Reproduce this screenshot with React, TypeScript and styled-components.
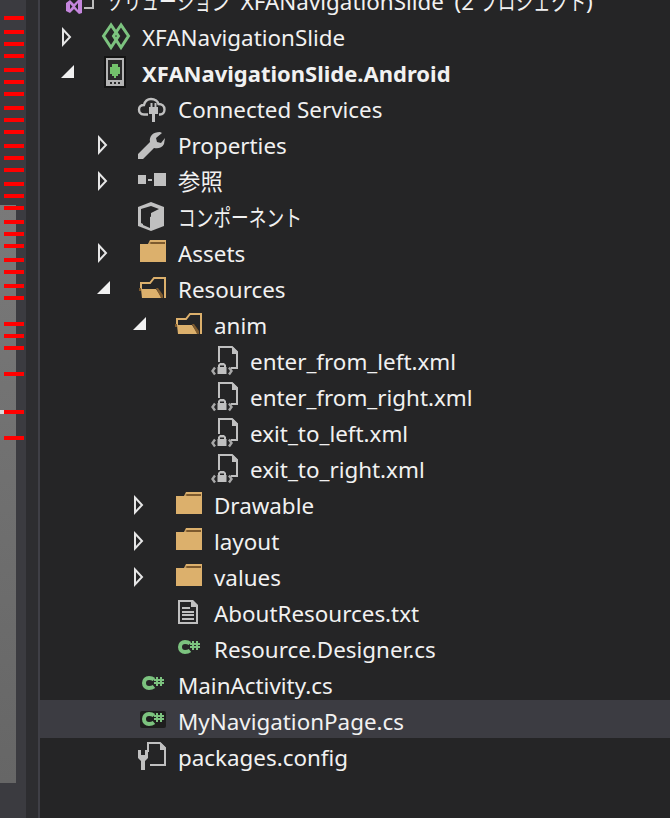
import React from "react";
import styled, { createGlobalStyle } from "styled-components";

const GlobalStyle = createGlobalStyle`
    html, body {
        margin: 0;
        padding: 0;
        background: #252526;
    }
`;

const Wrapper = styled.div`
    display: flex;
    width: 670px;
    height: 818px;
    overflow: hidden;
    background: #252526;
`;

const Scrollbar = styled.div`
    position: relative;
    flex: 0 0 26px;
    background: #3b3b40;
`;

const Thumb = styled.div`
    position: absolute;
    left: 0;
    top: 205px;
    width: 16px;
    height: 578px;
    background: linear-gradient(#797979, #666666);
`;

const Mark = styled.div<{ $y: number }>`
    position: absolute;
    left: 4px;
    top: ${(p) => p.$y - 2}px;
    width: 20px;
    height: 4px;
    background: #ff0000;
`;

const Caret = styled.div`
    position: absolute;
    left: 0;
    top: 410px;
    width: 4px;
    height: 4px;
    background: #d8d8d8;
`;

const Gutter = styled.div`
    flex: 0 0 12px;
    background: #2d2d30;
    border-right: 2px solid #3f3f46;
`;

const Tree = styled.div`
    flex: 1;
    margin-top: -17px;
`;

const Row = styled.div<{ $level: number; $selected?: boolean }>`
    box-sizing: border-box;
    display: flex;
    align-items: center;
    height: ${(p) => (p.$selected ? 38 : 36)}px;
    margin: ${(p) => (p.$selected ? "-3px 0 1px" : "0")};
    padding-top: ${(p) => (p.$selected ? 4 : 0)}px;
    padding-left: ${(p) => 60 + p.$level * 36}px;
    background: ${(p) => (p.$selected ? "#3c3c42" : "transparent")};
`;

const ArrowSlot = styled.div`
    flex: 0 0 42px;
    margin-left: -42px;
    display: flex;
    align-items: center;
    height: 36px;
`;

const IconSlot = styled.div`
    flex: 0 0 36px;
    height: 36px;
    margin-right: 6px;
`;

const Icon = styled.svg`
    display: block;
    width: 36px;
    height: 36px;
`;

const ArrowIcon = styled.svg`
    display: block;
    width: 16px;
    height: 36px;
`;

const Label = styled.span<{ $bold?: boolean }>`
    font-family: "Noto Sans", "Noto Sans CJK JP", sans-serif;
    font-size: ${(p) => (p.$bold ? 22 : 22.4)}px;
    line-height: 36px;
    margin-top: ${(p) => (p.$bold ? 0 : 2)}px;
    white-space: pre;
    color: #f1f1f1;
    font-weight: ${(p) => (p.$bold ? 700 : 400)};
`;

// the reference's kana are much narrower than Noto's, so squeeze them
const Kana = styled.span<{ $chars: number }>`
    display: inline-block;
    width: ${(p) => p.$chars * 22.4}px;
    margin-right: ${(p) => -p.$chars * 22.4 * 0.21}px;
    transform: scaleX(0.79);
    transform-origin: 0 50%;
`;

const Arrow = ({ open }: { open?: boolean }) => (
    <ArrowIcon viewBox="0 0 16 36">
        {open ? (
            <polygon points="3,23 16,10 16,23" fill="#f1f1f1" />
        ) : (
            <polygon points="5,10.5 12,18 5,25.5" fill="none" stroke="#e6e6e6" strokeWidth="2" />
        )}
    </ArrowIcon>
);

const svgIcon = (children: React.ReactNode) => <Icon viewBox="0 0 36 36">{children}</Icon>;

const GRAY = "#c0c0c0";
const GREEN = "#7cc37f";
const FOLDER = "#dcb06c";

const VsIcon = () =>
    svgIcon(
        <>
            <path d="M2 20 L6 17 L10 21 L17 14 L18 14 L18 30 L15 31 L10 26 L6 30 L2 28 Z M6 21 V26 L8.500 23.500 Z M14 20 L11 23.500 L14 27 Z" fill="#c586dd" fillRule="evenodd" />
            <path d="M20 25 H29 V17" fill="none" stroke="#bdbdbd" strokeWidth="2" />
        </>
    );

const ShareIcon = () =>
    svgIcon(
        <g fill="none" stroke={GREEN} strokeWidth="3">
            <path d="M11 6 L3.500 17 L11 28.500 L18.500 17 Z" />
            <path d="M21 6 L13.500 17 L21 28.500 L28.500 17 Z" />
        </g>
    );

const AndroidIcon = () =>
    svgIcon(
        <>
            <rect x="4" y="1" width="22" height="32" fill="#141414" />
            <rect x="7" y="4" width="16" height="26" fill="#2a2a2a" stroke="#b4b4b4" strokeWidth="2" />
            <rect x="7" y="25" width="16" height="5" fill="#b4b4b4" />
            <rect x="10" y="27" width="2" height="2" fill="#2a2a2a" />
            <rect x="14" y="27" width="2" height="2" fill="#2a2a2a" />
            <rect x="18" y="27" width="2" height="2" fill="#2a2a2a" />
            <path d="M12 9 H18 V12 H20 V19 H18 V21 H16 V23 H14 V21 H12 V19 H10 V12 H12 Z" fill="#73c26b" />
        </>
    );

const CloudIcon = () =>
    svgIcon(
        <>
            <path d="M12 23.500 H8 C4 23.500 3 20.500 3 18.500 C3 15.500 5 14 8 14 C9 10 12 8 15 8 C19 8 22 10.500 22.500 13 C26 13 28.500 15 28.500 18.500 C28.500 21.500 26.500 23.500 24 23.500 H23" fill="none" stroke={GRAY} strokeWidth="2.400" />
            <path d="M14.500 12 H16.500 V16 H18.500 V12 H20.500 V16 H22 V23 H19 V31 H16 V23 H13 V16 H14.500 Z" fill={GRAY} />
        </>
    );

const WrenchIcon = () =>
    svgIcon(
        <path d="M2 27 L14 15 C13 9 17 5 24 5 L26 6 L20 11 L21 15 L25 16 L29 11 L28 17 C26 21 22 22 18 21 L7 32 L2 32 Z" fill={GRAY} />
    );

const ReferenceIcon = () =>
    svgIcon(
        <>
            <rect x="2" y="12" width="8" height="9" fill={GRAY} />
            <rect x="12" y="16" width="4" height="2" fill={GRAY} />
            <rect x="18" y="10" width="12" height="13" fill={GRAY} />
        </>
    );

const ComponentIcon = () =>
    svgIcon(
        <>
            <path d="M15 3 L28 8 V27 L15 32 L2 27 V8 Z" fill={GRAY} />
            <path d="M15 7 L23 10 L15 14 V18 L7 15 V25 L5 24 V10 Z" fill="#252526" />
            <path d="M7 13 L15 10 L21 10 L14 14 V29 L7 26 Z" fill="#252526" />
        </>
    );

const FolderClosed = () =>
    svgIcon(
        <>
            <path d="M4 9 H12 L14 5 H30 V27 H4 Z" fill={FOLDER} />
            <path d="M13 8 L15 7 H29 V9 H15 Z" fill="#7d5a2e" />
        </>
    );

const FolderOpen = () =>
    svgIcon(
        <>
            <path d="M5 18 V12 H14 L18 7 H29 V27" fill="none" stroke={FOLDER} strokeWidth="2" />
            <path d="M5 18 H20 L26 27 H6 Z" fill={FOLDER} />
            <path d="M3 17 H5 V20 H3 Z M20 17 H22 L27 24 V27 H25 Z" fill="#7d5a2e" />
        </>
    );

const LockedFile = () =>
    svgIcon(
        <>
            <path d="M11 19 V4 H24 L29 9 V25 H23" fill="none" stroke={GRAY} strokeWidth="2" />
            <path d="M24 4 H25 L30 9 V11 H24 Z" fill={GRAY} />
            <path d="M10 24 V22 L12 20 H16 L18 22 V24 H18.500 V31 H9.500 V24 Z M12 24 H16 V22.500 H12 Z" fill={GRAY} fillRule="evenodd" />
            <path d="M7 24.500 L4.500 28 L7 31.500 M21 24.500 L23.500 28 L21 31.500" fill="none" stroke="#a8a8a8" strokeWidth="2.400" />
        </>
    );

const TextFile = () =>
    svgIcon(
        <>
            <path d="M7 6 H20 L25 11 V28 H7 Z" fill="none" stroke={GRAY} strokeWidth="2" />
            <path d="M19 5 H21 L26 10 V12 H19 Z" fill={GRAY} />
            <path d="M10 13 H18 M10 17 H22 M10 20 H22 M10 24 H22" stroke={GRAY} strokeWidth="2" />
        </>
    );

const CSharp = ({ halo }: { halo?: boolean }) =>
    svgIcon(
        <>
            {halo && <rect x="4" y="8" width="26" height="17" rx="2" fill="#1e1e1e" />}
            <path d="M18 12.500 C16 11 15 11 13 11 C10 11 8 13 8 16 C8 19 10 21 13 21 C15 21 16 21 18 19.500" fill="none" stroke={GREEN} strokeWidth="4" />
            <path d="M21 10 V19 M25 10 V19 M18 13 H28 M18 16 H28" stroke={GREEN} strokeWidth="2" />
        </>
    );

const PackageIcon = () =>
    svgIcon(
        <>
            <path d="M12 13 V4 H24 L29 9 V26 H14" fill="none" stroke={GRAY} strokeWidth="2" />
            <path d="M24 4 H25 L30 9 V11 H24 Z" fill={GRAY} />
            <path d="M2 11 H5 V16 H9 V11 H12 V19 L9 22 V31 H5 V22 L2 19 Z" fill={GRAY} />
        </>
    );

type Item = {
    level: number;
    text: React.ReactNode;
    icon: React.ReactNode;
    arrow?: "open" | "closed";
    bold?: boolean;
    selected?: boolean;
};

const items: Item[] = [
    {
        level: -1,
        text: (
            <>
                <Kana $chars={7}>ソリューション</Kana> 'XFANavigationSlide' (2 <Kana $chars={6}>プロジェクト</Kana>)
            </>
        ),
        icon: <VsIcon />,
    },
    { level: 0, text: "XFANavigationSlide", icon: <ShareIcon />, arrow: "closed" },
    { level: 0, text: "XFANavigationSlide.Android", icon: <AndroidIcon />, arrow: "open", bold: true },
    { level: 1, text: "Connected Services", icon: <CloudIcon /> },
    { level: 1, text: "Properties", icon: <WrenchIcon />, arrow: "closed" },
    { level: 1, text: "参照", icon: <ReferenceIcon />, arrow: "closed" },
    { level: 1, text: <Kana $chars={7}>コンポーネント</Kana>, icon: <ComponentIcon /> },
    { level: 1, text: "Assets", icon: <FolderClosed />, arrow: "closed" },
    { level: 1, text: "Resources", icon: <FolderOpen />, arrow: "open" },
    { level: 2, text: "anim", icon: <FolderOpen />, arrow: "open" },
    { level: 3, text: "enter_from_left.xml", icon: <LockedFile /> },
    { level: 3, text: "enter_from_right.xml", icon: <LockedFile /> },
    { level: 3, text: "exit_to_left.xml", icon: <LockedFile /> },
    { level: 3, text: "exit_to_right.xml", icon: <LockedFile /> },
    { level: 2, text: "Drawable", icon: <FolderClosed />, arrow: "closed" },
    { level: 2, text: "layout", icon: <FolderClosed />, arrow: "closed" },
    { level: 2, text: "values", icon: <FolderClosed />, arrow: "closed" },
    { level: 2, text: "AboutResources.txt", icon: <TextFile /> },
    { level: 2, text: "Resource.Designer.cs", icon: <CSharp /> },
    { level: 1, text: "MainActivity.cs", icon: <CSharp /> },
    { level: 1, text: "MyNavigationPage.cs", icon: <CSharp halo />, selected: true },
    { level: 1, text: "packages.config", icon: <PackageIcon /> },
];

const marks = [
    18, 32, 44, 56, 70, 82, 94, 108, 120, 132, 146, 158, 170, 184, 196, 208, 222, 234, 246, 260, 272, 286, 298, 324,
    336, 348, 374, 412, 438,
];

export default function App() {
    return (
        <Wrapper>
            <GlobalStyle />
            <Scrollbar>
                <Thumb />
                {marks.map((y) => (
                    <Mark key={y} $y={y} />
                ))}
                <Caret />
            </Scrollbar>
            <Gutter />
            <Tree>
                {items.map((item, i) => (
                    <Row key={i} $level={item.level} $selected={item.selected}>
                        <ArrowSlot>{item.arrow ? <Arrow open={item.arrow === "open"} /> : null}</ArrowSlot>
                        <IconSlot>{item.icon}</IconSlot>
                        <Label $bold={item.bold}>{item.text}</Label>
                    </Row>
                ))}
            </Tree>
        </Wrapper>
    );
}
